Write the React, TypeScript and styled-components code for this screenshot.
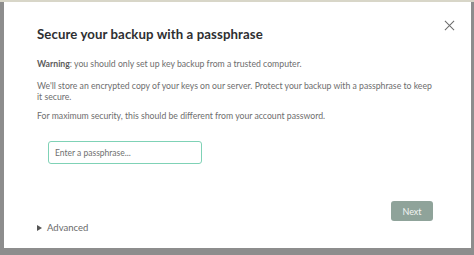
import styled, { createGlobalStyle } from "styled-components";

const Global = createGlobalStyle`
  html, body {
    margin: 0;
    padding: 0;
    background: #8d8d8d;
    font-family: Lato, "Open Sans", "Noto Sans", sans-serif;
  }
`;

const Backdrop = styled.div`
  width: 474px;
  height: 255px;
  padding: 2px 3px 7px 4px;
  box-sizing: border-box;
  background: linear-gradient(#d8d6c8 0, #d8d6c8 2px, #8d8d8d 2px);
`;

const Dialog = styled.div`
  position: relative;
  height: 100%;
  background: #fff;
  box-sizing: border-box;
  padding: 24px 38px 0 33px;
  display: flex;
  flex-direction: column;
  color: #2e2f32;
`;

const Title = styled.h2`
  margin: 0;
  font-size: 13.2px;
  font-weight: 700;
  letter-spacing: 0.1px;
  color: #2e2f32;
  line-height: 16px;
`;

const Close = styled.button`
  position: absolute;
  top: 17px;
  right: 15px;
  width: 13px;
  height: 13px;
  padding: 0;
  border: none;
  background: none;
  display: flex;
  align-items: center;
  justify-content: center;
`;

const Text = styled.p`
  margin: 0;
  font-size: 8.7px;
  line-height: 11px;
  color: #6e6e6e;
  margin-top: ${(p: { $gap: number }) => p.$gap}px;
`;

const Strong = styled.b`
  font-weight: 700;
  color: #5c5c5c;
`;

const Field = styled.input`
  margin: 20px 0 0 11px;
  width: 154px;
  height: 23px;
  box-sizing: border-box;
  border: 1px solid #7fd2b6;
  border-radius: 3px;
  padding: 0 6px;
  font-family: inherit;
  font-size: 8.5px;
  outline: none;
  &::placeholder {
    color: #6f6f6f;
  }
`;

const Footer = styled.div`
  margin-top: 37px;
  display: flex;
  justify-content: flex-end;
`;

const Next = styled.button`
  width: 42px;
  height: 20px;
  border: none;
  border-radius: 3px;
  background: #8fa39a;
  color: #f2f4f3;
  font-family: inherit;
  font-size: 9px;
  padding: 0;
`;

const Advanced = styled.div`
  margin-top: 1px;
  display: flex;
  align-items: center;
  gap: 5px;
  font-size: 9.5px;
  color: #6a6a6a;
`;

const Arrow = styled.span`
  width: 0;
  height: 0;
  border-top: 3px solid transparent;
  border-bottom: 3px solid transparent;
  border-left: 5px solid #555;
`;

export default function App() {
  return (
    <>
      <Global />
      <Backdrop>
        <Dialog>
          <Close aria-label="Close">
            <svg width="11" height="11" viewBox="0 0 12 12">
              <path d="M1 1L11 11M11 1L1 11" stroke="#6b6b6b" strokeWidth="1.1" />
            </svg>
          </Close>
          <Title>Secure your backup with a passphrase</Title>
          <Text $gap={16}>
            <Strong>Warning</Strong>: you should only set up key backup from a trusted computer.
          </Text>
          <Text $gap={11}>
            We'll store an encrypted copy of your keys on our server. Protect your backup with a
            passphrase to keep it secure.
          </Text>
          <Text $gap={8}>For maximum security, this should be different from your account password.</Text>
          <Field placeholder="Enter a passphrase..." />
          <Footer>
            <Next>Next</Next>
          </Footer>
          <Advanced>
            <Arrow />
            Advanced
          </Advanced>
        </Dialog>
      </Backdrop>
    </>
  );
}
